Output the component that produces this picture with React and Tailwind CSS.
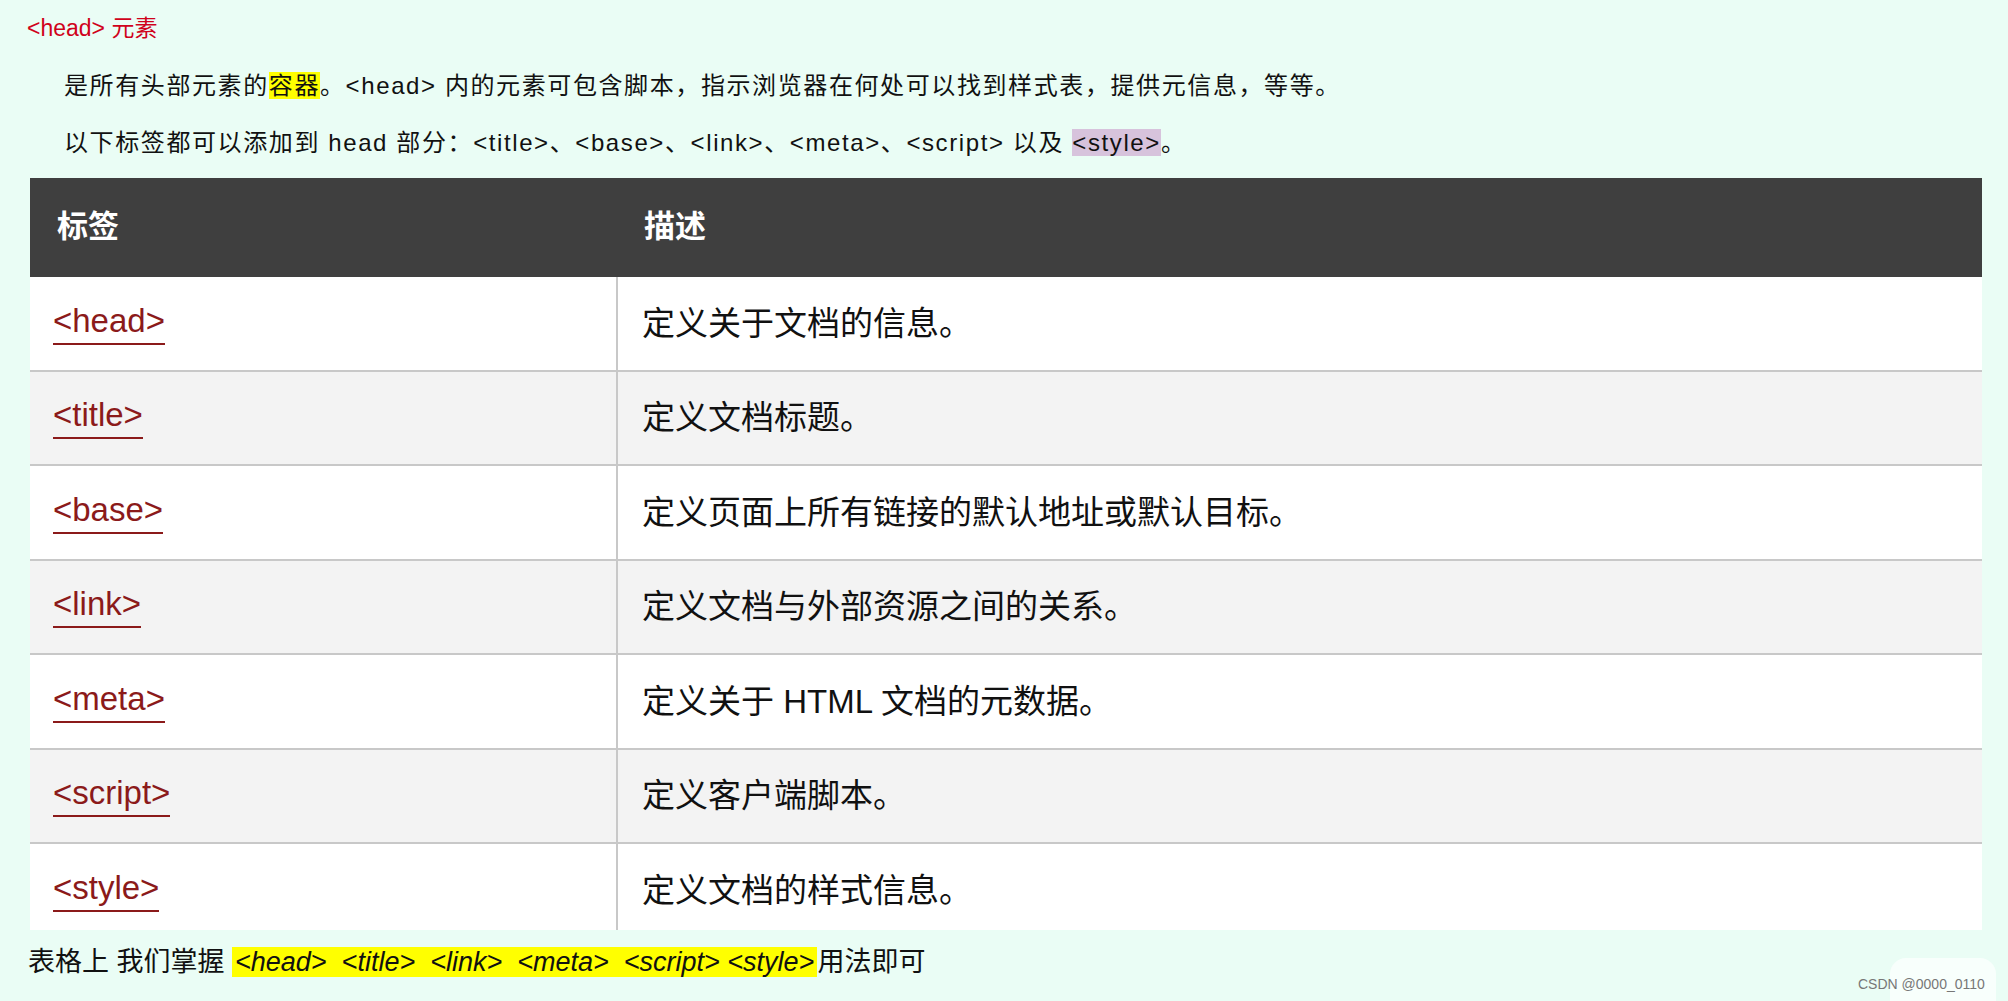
const ROWS = [
  ['<head>', '定义关于文档的信息。'],
  ['<title>', '定义文档标题。'],
  ['<base>', '定义页面上所有链接的默认地址或默认目标。'],
  ['<link>', '定义文档与外部资源之间的关系。'],
  ['<meta>', '定义关于 HTML 文档的元数据。'],
  ['<script>', '定义客户端脚本。'],
  ['<style>', '定义文档的样式信息。'],
];

const font = { fontFamily: '"Liberation Sans", "Noto Sans CJK SC", sans-serif' };

export default function App() {
  return (
    <div className="w-[2008px] h-[1001px] bg-[#eafdf5] overflow-hidden relative text-[#111]" style={font}>
      <p className="pl-[27px] pt-[13px] text-[23px] text-[#d0021b] leading-[30px]">&lt;head&gt; 元素</p>
      <p className="pl-[64px] mt-[27px] text-[24px] tracking-[1.6px] leading-[32px]">
        是所有头部元素的<span className="bg-[#ffff00]">容器</span>。&lt;head&gt; 内的元素可包含脚本，指示浏览器在何处可以找到样式表，提供元信息，等等。
      </p>
      <p className="pl-[64px] mt-[25px] text-[24px] tracking-[1.6px] leading-[32px]">
        以下标签都可以添加到 head 部分：&lt;title&gt;、&lt;base&gt;、&lt;link&gt;、&lt;meta&gt;、&lt;script&gt; 以及 <span className="bg-[#d7c3dc]">&lt;style&gt;</span>。
      </p>
      <div className="ml-[30px] mt-[19px] w-[1952px] h-[752px] overflow-hidden">
        <div className="flex h-[99px] bg-[#3f3f3f] text-white text-[31px] font-bold items-center">
          <div className="w-[588px] pl-[27px]">标签</div>
          <div className="pl-[26px]">描述</div>
        </div>
        {ROWS.map(([tag, desc], i) => (
          <div key={tag} className={`flex h-[94.5px] border-b-2 border-[#c8c8c8] ${i % 2 ? 'bg-[#f3f3f3]' : 'bg-white'}`}>
            <div className="w-[588px] border-r-2 border-[#c8c8c8] pl-[23px] flex items-center">
              <span className="text-[33px] text-[#8b1a1a] border-b-2 border-[#8b1a1a] pb-[3px] leading-[38px]">{tag}</span>
            </div>
            <div className="pl-[24px] flex items-center text-[33px]">{desc}</div>
          </div>
        ))}
      </div>
      <p className="pl-[28px] mt-[14px] text-[27px] leading-[36px]">
        表格上 我们掌握 <span className="bg-[#ffff00] italic px-[3px]">&lt;head&gt;&nbsp; &lt;title&gt;&nbsp; &lt;link&gt;&nbsp; &lt;meta&gt;&nbsp; &lt;script&gt; &lt;style&gt;</span>用法即可
      </p>
      <div className="absolute left-[1890px] top-[958px] w-[106px] h-[60px] bg-[#f8fffc] rounded-[16px]" />
      <span className="absolute left-[1858px] top-[974px] text-[14px] text-[#777]">CSDN @0000_0110</span>
    </div>
  );
}
